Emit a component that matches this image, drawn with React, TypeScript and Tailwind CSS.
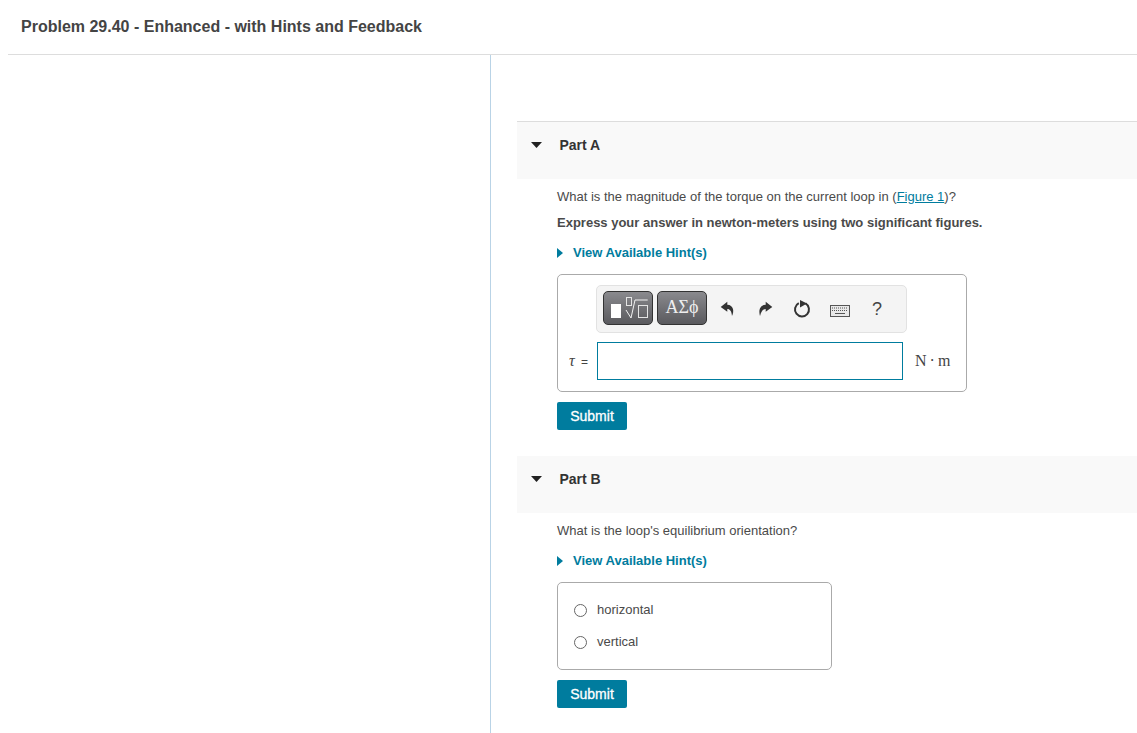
import { useState } from 'react';

const sans = 'font-["Liberation_Sans",Arial,sans-serif]';
const serif = 'font-["Liberation_Serif",serif]';

function Caret() {
  return (
    <svg width="11" height="6" viewBox="0 0 11 6" className="block">
      <path d="M0 0h11L5.5 6z" fill="#222" />
    </svg>
  );
}

function PartHeader({ label }: { label: string }) {
  return (
    <div className="flex h-[57px] items-center bg-[#f9f9f9] pb-[11px] pl-[14px]">
      <Caret />
      <span className="ml-[17.500px] text-[14px] font-bold text-[#333]">{label}</span>
    </div>
  );
}

function HintLink() {
  return (
    <div className="flex items-center text-[13px] font-bold text-[#007c9e]">
      <svg width="6" height="10" viewBox="0 0 6 10" className="block">
        <path d="M0 0l6 5-6 5z" fill="#007c9e" />
      </svg>
      <span className="ml-[10px]">View Available Hint(s)</span>
    </div>
  );
}

function SubmitButton() {
  return (
    <button className="block h-[28px] w-[70px] rounded-[2px] bg-[#007c9e] text-[14px] text-white [-webkit-text-stroke:0.3px_#fff]">
      Submit
    </button>
  );
}

function Toolbar() {
  return (
    <div className="flex h-[48px] w-[311px] items-center rounded-[5px] border border-[#e2e2e2] bg-[#f4f4f4] pl-[6px]">
      <div className="mb-[3px] flex h-[34px] w-[50px] items-center justify-center rounded-[5px] border border-[#333] bg-gradient-to-b from-[#8a8a8e] to-[#5a5a5e]">
        <svg width="46" height="30" viewBox="0 0 46 30">
          <rect x="6" y="11" width="10" height="14" fill="#fff" />
          <rect x="21.500" y="4.500" width="5" height="8" fill="none" stroke="#e4e4e4" />
          <path d="M21 17l5 8 4-18h12.700" fill="none" stroke="#f2f2f2" />
          <rect x="33.500" y="12.500" width="9" height="12" fill="none" stroke="#e4e4e4" />
        </svg>
      </div>
      <div className={`mb-[3px] ml-[4px] flex h-[34px] w-[50px] items-center justify-center rounded-[5px] border border-[#333] bg-gradient-to-b from-[#8a8a8e] to-[#5a5a5e] text-[18px] text-[#eee] ${serif}`}>
        ΑΣϕ
      </div>
      <svg width="16" height="16" viewBox="0 0 16 16" className="ml-[12px]">
        <path d="M8.300.7L1.700 6l6.600 4.700V8c2.700 0 4.200 2 4.700 7 2.500-5 1.500-11-4.700-11.300z" fill="#333" />
      </svg>
      <svg width="16" height="16" viewBox="0 0 16 16" className="ml-[24px]">
        <path d="M6.700.7L13.300 6l-6.600 4.700V8C4 8 2.500 10 1 15-.5 10 .5 4 6.700 3.700z" fill="#333" />
      </svg>
      <svg width="18" height="18" viewBox="0 0 18 18" className="ml-[18px]">
        <path d="M5.800 3.200A7 7 0 1 0 12.500 3.400" fill="none" stroke="#333" strokeWidth="2" />
        <path d="M7 0l7 3.500-7 4z" fill="#333" />
      </svg>
      <svg width="20" height="12" viewBox="0 0 20 12" className="mt-[3px] ml-[19px]">
        <rect x="0.500" y="0.500" width="19" height="11" fill="#e8e8e8" stroke="#555" />
        <path d="M2 3h16M2 5.500h16" stroke="#555" strokeDasharray="1 1" />
        <path d="M5 8.500h10" stroke="#555" />
      </svg>
      <span className="ml-[22px] text-[18px] text-[#444]">?</span>
    </div>
  );
}

export default function App() {
  const [choice, setChoice] = useState('');

  return (
    <div className={`h-[733px] w-[1137px] overflow-hidden bg-white pl-2 text-[#4a4a4a] ${sans}`}>
      <div className="flex h-[55px] items-center border-b border-[#ddd] pl-[13px]">
        <h1 className="text-[16px] font-bold text-[#444]">Problem 29.40 - Enhanced - with Hints and Feedback</h1>
      </div>
      <div className="flex h-[678px]">
        <div className="w-[483px] shrink-0 border-r border-[#b9d3e6]" />
        <div className="flex-1 pt-[66px] pl-[26px]">
          <div className="border-t border-[#ddd]">
            <PartHeader label="Part A" />
          </div>
          <div className="pl-[40px]">
            <p className="mt-[10px] text-[13px] leading-[16px]">
              What is the magnitude of the torque on the current loop in (
              <span className="text-[#007c9e] underline">Figure 1</span>)?
            </p>
            <p className="mt-[10px] text-[13px] leading-[16px] font-bold">
              Express your answer in newton-meters using two significant figures.
            </p>
            <div className="mt-[12px] h-[17px]">
              <HintLink />
            </div>
            <div className="mt-[14px] h-[118px] w-[410px] rounded-[5px] border border-[#aaa] pt-[10px] pl-[38px]">
              <Toolbar />
              <div className="mt-[9px] ml-[1px] flex items-center">
                <div className="-ml-[28px] w-[28px] text-[12px] text-[#444]">
                  <i className={`mr-[3px] text-[16px] ${serif}`}>τ</i> =
                </div>
                <div className="h-[38px] w-[306px] border border-[#007c9e] bg-white" />
                <div className={`ml-[12px] text-[16px] text-[#444] ${serif}`}>
                  N<span className="mx-[3px]">·</span>m
                </div>
              </div>
            </div>
            <div className="mt-[10px]">
              <SubmitButton />
            </div>
          </div>

          <div className="mt-[26px]">
            <PartHeader label="Part B" />
          </div>
          <div className="pl-[40px]">
            <p className="mt-[10px] text-[13px] leading-[16px]">What is the loop's equilibrium orientation?</p>
            <div className="mt-[12px] h-[17px]">
              <HintLink />
            </div>
            <div className="mt-[14px] flex h-[88px] w-[275px] flex-col justify-center gap-[14px] rounded-[5px] border border-[#aaa] pl-[16px]">
              {['horizontal', 'vertical'].map((opt) => (
                <label key={opt} className="flex h-[18px] items-center text-[13px]">
                  <input
                    type="radio"
                    name="orientation"
                    checked={choice === opt}
                    onChange={() => setChoice(opt)}
                    className="h-[13px] w-[13px] appearance-none rounded-full border border-[#666] bg-white"
                  />
                  <span className="ml-[10px]">{opt}</span>
                </label>
              ))}
            </div>
            <div className="mt-[10px]">
              <SubmitButton />
            </div>
          </div>
        </div>
      </div>
    </div>
  );
}
